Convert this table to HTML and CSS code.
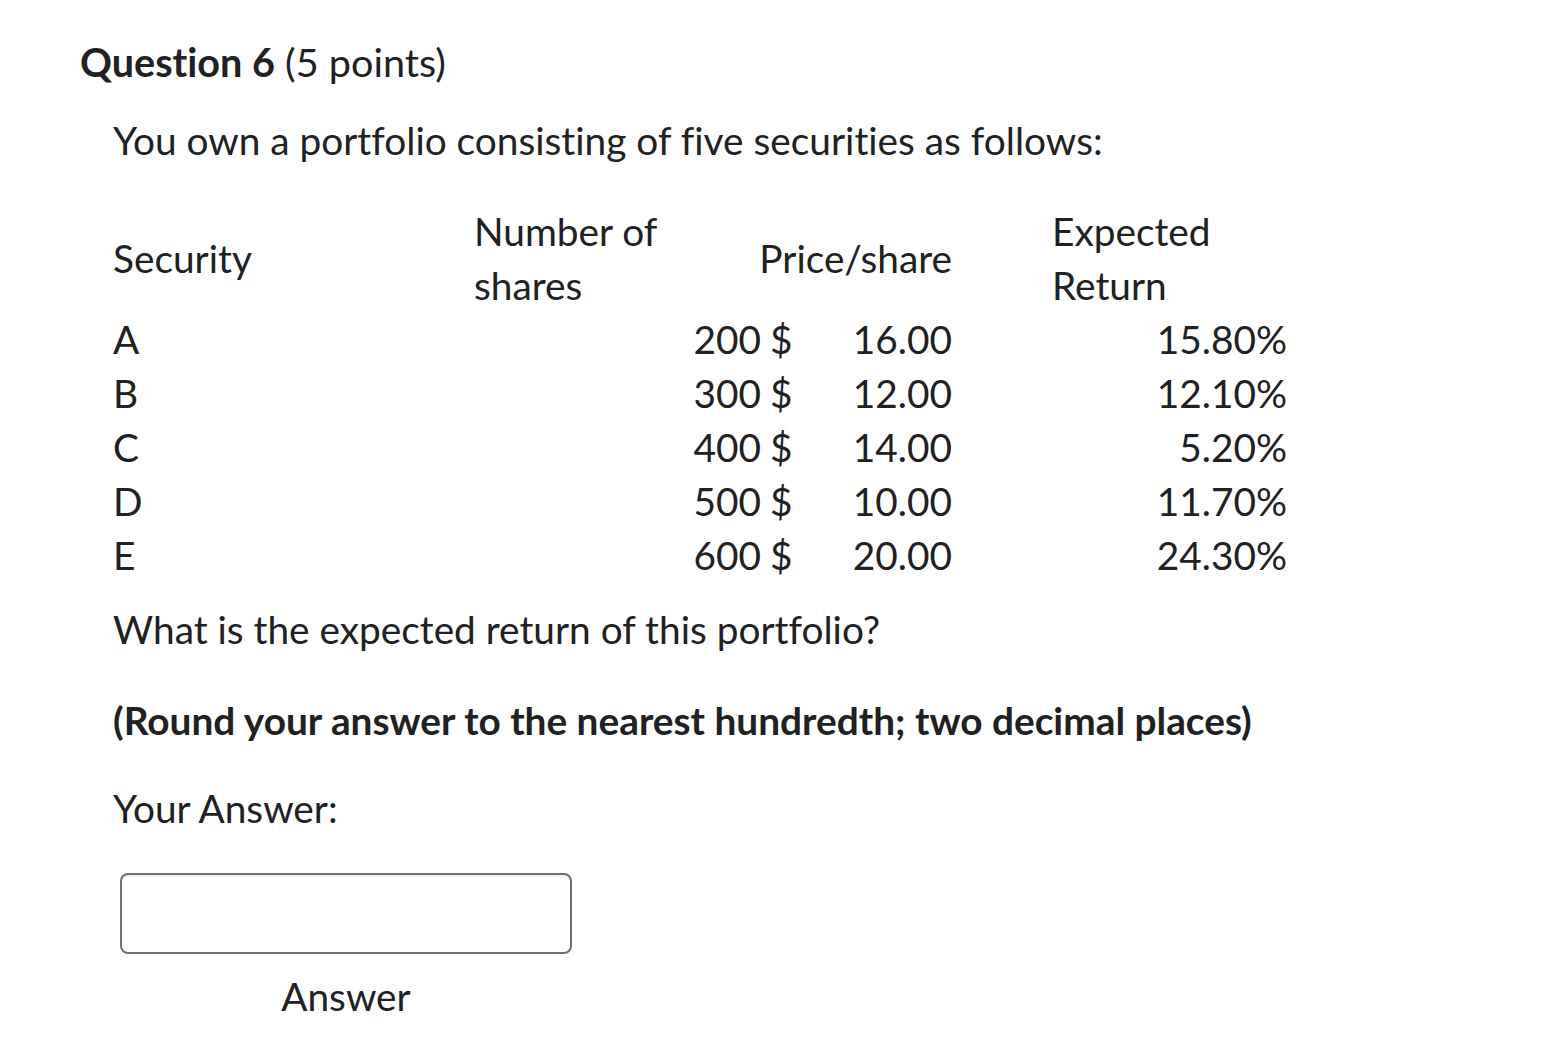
FILE: index.html
```html
<!DOCTYPE html>
<html>
<head>
<meta charset="utf-8">
<link rel="stylesheet" href="styles.css">
</head>
<body>
<div class="page">
  <h1 class="qtitle"><span class="qnum">Question 6</span> (5 points)</h1>
  <div class="qbody">
    <p class="intro">You own a portfolio consisting of five securities as follows:</p>
    <div class="grid">
      <div class="h h1">Security</div>
      <div class="h h2">Number of<br>shares</div>
      <div class="h h3">Price/share</div>
      <div class="h h4">Expected<br>Return</div>

      <div class="c1">A</div><div class="c2">200</div><div class="c3"><span>$</span><span>16.00</span></div><div class="c4">15.80%</div>
      <div class="c1">B</div><div class="c2">300</div><div class="c3"><span>$</span><span>12.00</span></div><div class="c4">12.10%</div>
      <div class="c1">C</div><div class="c2">400</div><div class="c3"><span>$</span><span>14.00</span></div><div class="c4">5.20%</div>
      <div class="c1">D</div><div class="c2">500</div><div class="c3"><span>$</span><span>10.00</span></div><div class="c4">11.70%</div>
      <div class="c1">E</div><div class="c2">600</div><div class="c3"><span>$</span><span>20.00</span></div><div class="c4">24.30%</div>
    </div>
    <p class="ask">What is the expected return of this portfolio?</p>
    <p class="round">(Round your answer to the nearest hundredth; two decimal places)</p>
    <p class="your">Your Answer:</p>
    <div class="answer">
      <div class="box"></div>
      <div class="label">Answer</div>
    </div>
  </div>
</div>
</body>
</html>
```
FILE: styles.css
```css
html, body {
  margin: 0;
  padding: 0;
  background: #ffffff;
}
body {
  font-family: Lato, "Open Sans", sans-serif;
  color: #202122;
  font-size: 38.8px;
  line-height: 54px;
  font-variant-ligatures: none;
  font-feature-settings: "liga" 0, "clig" 0;
}
.page {
  padding: 35px 0 0 80px;
}
.qtitle {
  margin: 0;
  font-size: 39.6px;
  line-height: 54px;
  font-weight: 400;
}
.qnum {
  font-weight: 700;
}
.qbody {
  padding-left: 33px;
}
p {
  margin: 0;
}
.intro {
  margin-top: 24px;
}
.grid {
  margin-top: 37px;
  display: grid;
  grid-template-columns: 361px 287px 191px 335px;
  grid-auto-rows: 54px;
  white-space: nowrap;
}
.h {
  grid-row: span 2;
  display: flex;
  flex-direction: column;
  justify-content: center;
}
.h3 {
  justify-self: end;
  text-align: right;
}
.h4 { padding-left: 100px; }
.c2 { text-align: right; }
.c3 {
  display: flex;
  justify-content: space-between;
  padding-left: 9px;
}
.c4 { text-align: right; }
.ask {
  margin-top: 20px;
}
.round {
  margin-top: 37px;
  font-weight: 700;
}
.your {
  margin-top: 34px;
}
.answer {
  margin-top: 38px;
  margin-left: 7px;
  width: 452px;
  display: flex;
  flex-direction: column;
  align-items: center;
}
.box {
  box-sizing: border-box;
  width: 452px;
  height: 81px;
  border: 2px solid #6d7176;
  border-radius: 8px;
  box-shadow: inset 0 2px 2px rgba(0, 0, 0, 0.06);
  background: #fff;
}
.label {
  margin-top: 15px;
}
```
